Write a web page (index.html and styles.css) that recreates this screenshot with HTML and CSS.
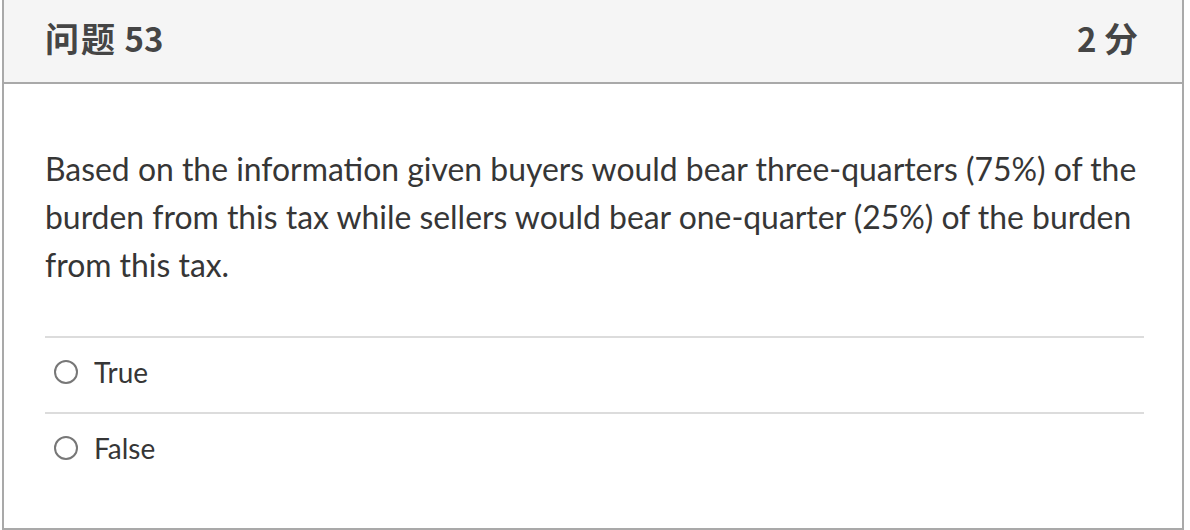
FILE: index.html
```html
<!DOCTYPE html>
<html lang="zh">
<head>
<meta charset="utf-8">
<title>问题 53</title>
<link rel="stylesheet" href="styles.css">
</head>
<body>
<div class="question">
  <div class="header">
    <span class="title"><span class="cjk">问题</span> 53</span>
    <span class="points">2 <span class="cjk">分</span></span>
  </div>
  <div class="content">
    <p class="text">Based on the information given buyers would bear three-quarters (75%) of the burden from this tax while sellers would bear one-quarter (25%) of the burden from this tax.</p>
    <div class="answers">
      <label class="answer"><span class="radio"></span><span class="label">True</span></label>
      <label class="answer"><span class="radio"></span><span class="label">False</span></label>
    </div>
  </div>
</div>
</body>
</html>
```
FILE: styles.css
```css
html, body {
  margin: 0;
  padding: 0;
  background: #fff;
}
body {
  width: 1190px;
  height: 530px;
  overflow: hidden;
  font-family: "Lato", "Noto Sans CJK SC", sans-serif;
  color: #333;
}
.question {
  margin: -2px 0 0 2px;
  width: 1182px;
  height: 532px;
  box-sizing: border-box;
  border: 2px solid #a9a9a9;
  display: flex;
  flex-direction: column;
}
.header {
  height: 84px;
  box-sizing: border-box;
  flex: none;
  background: #f5f5f5;
  border-bottom: 2px solid #a9a9a9;
  display: flex;
  align-items: center;
  justify-content: space-between;
  padding: 0 44px 8px 41px;
  font-family: "Noto Sans CJK SC", sans-serif;
  font-weight: 700;
  font-size: 33px;
  color: #454545;
}
.header .cjk {
  font-size: 34px;
  letter-spacing: 2px;
}
.points .cjk {
  letter-spacing: 0;
}
.content {
  padding: 61px 38px 0 41px;
}
.text {
  margin: 0;
  font-size: 31.9px;
  line-height: 48px;
  color: #363636;
}
.answers {
  margin-top: 47px;
}
.answer {
  display: flex;
  align-items: center;
  border-top: 2px solid #dcdcdc;
  font-size: 28px;
  color: #363636;
  padding-bottom: 6px;
  box-sizing: border-box;
  height: 76px;
}
.radio {
  width: 20px;
  height: 20px;
  border: 2px solid #777;
  border-radius: 50%;
  margin: 0 16px 0 9px;
  flex: none;
}
```
